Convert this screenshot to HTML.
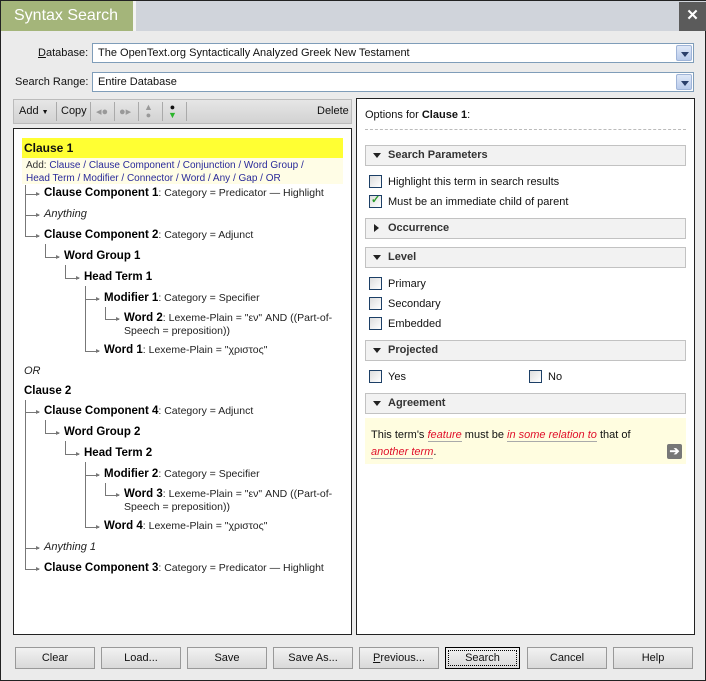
<!DOCTYPE html>
<html><head><style>
*{box-sizing:border-box;margin:0;padding:0}
body{width:706px;height:681px;overflow:hidden;font-family:"Liberation Sans",Arial,sans-serif;font-size:11px;color:#111;background:#fff}
#win{position:absolute;left:0;top:0;width:706px;height:681px;border:1px solid #222;background:#ebebeb}
.a{position:absolute;white-space:nowrap}
.sel{position:absolute;left:91px;width:602px;height:20px;border:1px solid #7f9db9;background:#fff;padding:3px 5px;font-size:11px}
.dd{position:absolute;right:1px;top:1px;width:16px;height:16px;background:linear-gradient(#dfe8f7,#b9cbeb);border:1px solid #9fb4d8;border-radius:2px}
.dd:after{content:"";position:absolute;left:4px;top:6px;border:4px solid transparent;border-top:5px solid #2a3f6a;border-bottom:0}
.btn{position:absolute;top:646px;height:22px;width:80px;border:1px solid #999;background:linear-gradient(#f2f2f2,#d9d9d9);text-align:center;line-height:20px;font-size:11px}
.hdr{position:absolute;left:364px;width:321px;height:21px;border:1px solid #c2c2c2;background:#f2f2f2;font-weight:bold;font-size:11px;padding:3px 0 0 22px;color:#333}
.tri{position:absolute;left:7px;top:7px;border:4px solid transparent;border-top:5px solid #222;border-bottom:0}
.trr{position:absolute;left:8px;top:5px;border:4px solid transparent;border-left:5px solid #222;border-right:0}
.cb{position:absolute;width:13px;height:13px;border:1px solid #1c3f66;background:linear-gradient(135deg,#ddd,#fff)}
.r{position:absolute;white-space:nowrap;font-size:10.5px;color:#222}
.r b{font-size:11.5px;color:#000}
.v{position:absolute;width:1px;background:#777}
.h{position:absolute;height:1px;background:#777}
.h:after{content:"";position:absolute;right:-1px;top:-2px;border:2.5px solid transparent;border-left:4px solid #777;border-right:0}
.red{color:#e0102a;font-style:italic;border-bottom:1px solid #aaa}
</style></head><body><div id="win">
<div class="a" style="left:0;top:0;width:705px;height:30px;background:#d0d4db"></div>
<div class="a" style="left:0;top:0;width:132px;height:30px;background:#a4b57a;color:#fff;font-size:16px;padding:6px 0 0 13px">Syntax Search</div>
<div class="a" style="left:132px;top:0;width:3px;height:30px;background:#f3f3f3"></div>
<div class="a" style="left:678px;top:1px;width:27px;height:29px;background:#5b5b5b;color:#fff;font-size:15px;font-weight:bold;text-align:center;line-height:28px">✕</div>

<div class="a" style="left:37px;top:46px"><u>D</u>atabase:</div>
<div class="sel" style="top:42px">The OpenText.org Syntactically Analyzed Greek New Testament<div class="dd"></div></div>
<div class="a" style="left:14px;top:75px">Search Range:</div>
<div class="sel" style="top:71px">Entire Database<div class="dd"></div></div>

<div class="a" style="left:12px;top:98px;width:339px;height:25px;border:1px solid #bbb;background:linear-gradient(#e6e6e6,#d2d2d2)"></div>
<div class="a" style="left:18px;top:104px;font-size:11px">Add <span style="font-size:7px">▼</span></div>
<div class="a" style="left:55px;top:101px;width:1px;height:19px;background:#aaa"></div>
<div class="a" style="left:60px;top:104px">Copy</div>
<div class="a" style="left:89px;top:101px;width:1px;height:19px;background:#aaa"></div>
<div class="a" style="left:95px;top:104px;color:#999">◂●</div>
<div class="a" style="left:113px;top:101px;width:1px;height:19px;background:#aaa"></div>
<div class="a" style="left:118px;top:104px;color:#999">●▸</div>
<div class="a" style="left:137px;top:101px;width:1px;height:19px;background:#aaa"></div>
<div class="a" style="left:143px;top:102px;color:#999;font-size:9px;line-height:8px;text-align:center">▲<br>●</div>
<div class="a" style="left:161px;top:101px;width:1px;height:19px;background:#aaa"></div>
<div class="a" style="left:167px;top:102px;font-size:9px;line-height:8px;text-align:center">●<br><span style="color:#2bb52b">▼</span></div>
<div class="a" style="left:185px;top:101px;width:1px;height:19px;background:#aaa"></div>
<div class="a" style="left:316px;top:104px">Delete</div>

<div class="a" style="left:12px;top:127px;width:339px;height:507px;border:1px solid #222;background:#fff"></div>
<div class="a" style="left:21px;top:137px;width:321px;height:20px;background:#ffff33;font-weight:bold;font-size:12px;padding:3px 2px">Clause 1</div>
<div class="a" style="left:21px;top:157px;width:321px;height:26px;background:#fffde6;font-size:10px;color:#2a2a9a;padding:1px 4px;line-height:13px"><span style="color:#333">Add:</span> Clause / Clause Component / Conjunction / Word Group /<br>Head Term / Modifier / Connector / Word / Any / Gap / OR</div>

<!-- tree lines -->
<div class="v" style="left:24px;top:184px;height:52px"></div>
<div class="h" style="left:24px;top:193px;width:14px"></div>
<div class="h" style="left:24px;top:214px;width:14px"></div>
<div class="h" style="left:24px;top:235px;width:14px"></div>
<div class="v" style="left:44px;top:243px;height:13px"></div><div class="h" style="left:44px;top:256px;width:14px"></div>
<div class="v" style="left:64px;top:264px;height:13px"></div><div class="h" style="left:64px;top:277px;width:14px"></div>
<div class="v" style="left:84px;top:285px;height:65px"></div><div class="h" style="left:84px;top:298px;width:14px"></div><div class="h" style="left:84px;top:350px;width:14px"></div>
<div class="v" style="left:104px;top:306px;height:12px"></div><div class="h" style="left:104px;top:318px;width:14px"></div>

<div class="v" style="left:24px;top:399px;height:169px"></div>
<div class="h" style="left:24px;top:411px;width:14px"></div>
<div class="h" style="left:24px;top:547px;width:14px"></div>
<div class="h" style="left:24px;top:568px;width:14px"></div>
<div class="v" style="left:44px;top:419px;height:13px"></div><div class="h" style="left:44px;top:432px;width:14px"></div>
<div class="v" style="left:64px;top:440px;height:13px"></div><div class="h" style="left:64px;top:453px;width:14px"></div>
<div class="v" style="left:84px;top:461px;height:65px"></div><div class="h" style="left:84px;top:474px;width:14px"></div><div class="h" style="left:84px;top:526px;width:14px"></div>
<div class="v" style="left:104px;top:482px;height:12px"></div><div class="h" style="left:104px;top:494px;width:14px"></div>

<div class="r" style="left:43px;top:186px"><b>Clause Component 1</b>: Category = Predicator — Highlight</div>
<div class="r" style="left:43px;top:207px;font-style:italic;font-size:11px">Anything</div>
<div class="r" style="left:43px;top:228px"><b>Clause Component 2</b>: Category = Adjunct</div>
<div class="r" style="left:63px;top:249px"><b>Word Group 1</b></div>
<div class="r" style="left:83px;top:270px"><b>Head Term 1</b></div>
<div class="r" style="left:103px;top:291px"><b>Modifier 1</b>: Category = Specifier</div>
<div class="r" style="left:123px;top:311px;line-height:13px"><b>Word 2</b>: Lexeme-Plain = "εν" AND ((Part-of-<br>Speech = preposition))</div>
<div class="r" style="left:103px;top:343px"><b>Word 1</b>: Lexeme-Plain = "χριστος"</div>
<div class="r" style="left:23px;top:364px;font-style:italic;font-size:11px">OR</div>
<div class="r" style="left:23px;top:384px"><b>Clause 2</b></div>
<div class="r" style="left:43px;top:404px"><b>Clause Component 4</b>: Category = Adjunct</div>
<div class="r" style="left:63px;top:425px"><b>Word Group 2</b></div>
<div class="r" style="left:83px;top:446px"><b>Head Term 2</b></div>
<div class="r" style="left:103px;top:467px"><b>Modifier 2</b>: Category = Specifier</div>
<div class="r" style="left:123px;top:487px;line-height:13px"><b>Word 3</b>: Lexeme-Plain = "εν" AND ((Part-of-<br>Speech = preposition))</div>
<div class="r" style="left:103px;top:519px"><b>Word 4</b>: Lexeme-Plain = "χριστος"</div>
<div class="r" style="left:43px;top:540px;font-style:italic;font-size:11px">Anything 1</div>
<div class="r" style="left:43px;top:561px"><b>Clause Component 3</b>: Category = Predicator — Highlight</div>

<!-- right panel -->
<div class="a" style="left:355px;top:97px;width:339px;height:537px;border:1px solid #222;background:#fff"></div>
<div class="a" style="left:364px;top:108px">Options for <b>Clause 1</b>:</div>
<div class="a" style="left:364px;top:128px;width:321px;border-top:1px dashed #bbb"></div>
<div class="hdr" style="top:144px"><div class="tri"></div>Search Parameters</div>
<div class="cb" style="left:368px;top:174px"></div><div class="a" style="left:387px;top:175px">Highlight this term in search results</div>
<div class="cb" style="left:368px;top:194px"><span style="position:absolute;left:1px;top:-3px;color:#2a9a2a;font-size:11px;font-weight:bold">✓</span></div><div class="a" style="left:387px;top:195px">Must be an immediate child of parent</div>
<div class="hdr" style="top:217px"><div class="trr"></div>Occurrence</div>
<div class="hdr" style="top:246px"><div class="tri"></div>Level</div>
<div class="cb" style="left:368px;top:276px"></div><div class="a" style="left:387px;top:277px">Primary</div>
<div class="cb" style="left:368px;top:296px"></div><div class="a" style="left:387px;top:297px">Secondary</div>
<div class="cb" style="left:368px;top:316px"></div><div class="a" style="left:387px;top:317px">Embedded</div>
<div class="hdr" style="top:339px"><div class="tri"></div>Projected</div>
<div class="cb" style="left:368px;top:369px"></div><div class="a" style="left:387px;top:370px">Yes</div>
<div class="cb" style="left:528px;top:369px"></div><div class="a" style="left:547px;top:370px">No</div>
<div class="hdr" style="top:392px"><div class="tri"></div>Agreement</div>
<div class="a" style="left:364px;top:417px;width:321px;height:46px;background:#fffde0"></div>
<div class="a" style="left:370px;top:426px;line-height:17px">This term's <span class="red">feature</span> must be <span class="red">in some relation to</span> that of<br><span class="red">another term</span>.</div>
<div class="a" style="left:666px;top:443px;width:15px;height:15px;background:#777;color:#fff;font-weight:bold;text-align:center;line-height:14px;font-size:12px;border-radius:2px">➔</div>

<div class="btn" style="left:14px">Clear</div>
<div class="btn" style="left:100px">Load...</div>
<div class="btn" style="left:186px">Save</div>
<div class="btn" style="left:272px">Save As...</div>
<div class="btn" style="left:358px"><u>P</u>revious...</div>
<div class="btn" style="left:444px;width:75px;border:1px solid #000;outline:1px dotted #000;outline-offset:-4px">Search</div>
<div class="btn" style="left:526px">Cancel</div>
<div class="btn" style="left:612px">Help</div>
</div></body></html>
